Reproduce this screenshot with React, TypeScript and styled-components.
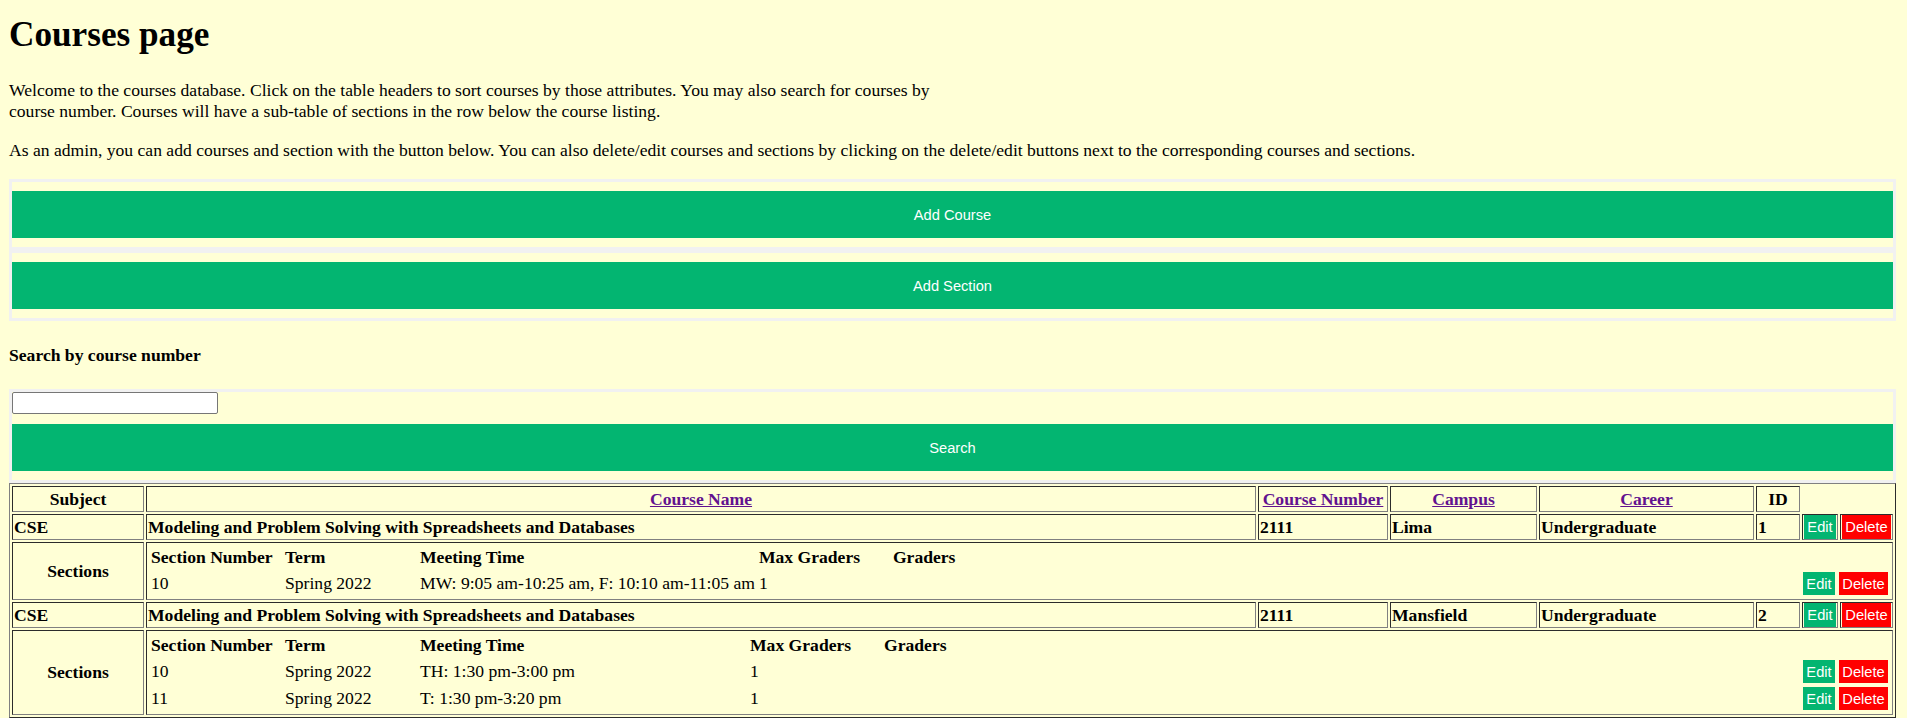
import React from "react";
import styled, { createGlobalStyle } from "styled-components";

const GlobalStyle = createGlobalStyle`
  html {
    overflow: hidden;
  }
  body {
    margin: 0;
    background: #ffffd6;
    color: #000;
    font-family: "Liberation Serif", "Times New Roman", serif;
  }
`;

const Page = styled.div`
  padding: 0 11px 20px 9px;
`;

const Title = styled.h1`
  font-size: 35.2px;
  font-weight: bold;
  line-height: normal;
  margin: 15px 0 25px;
`;

const Intro = styled.p<{ $narrow?: boolean }>`
  font-size: 17.6px;
  line-height: 21px;
  margin: 18px 0;
  width: ${(p) => (p.$narrow ? "50%" : "auto")};
`;

const ActionForm = styled.form`
  border: 3px solid #f1f1f1;
`;

const WideButton = styled.button`
  display: block;
  width: 100%;
  height: 47px;
  margin: 9px 0;
  padding: 0 20px;
  border: none;
  background: #03b571;
  color: #fff;
  font-family: "Liberation Sans", Arial, sans-serif;
  font-size: 14.67px;
  cursor: pointer;
`;

const SearchLabel = styled.h4`
  font-size: 17.6px;
  font-weight: bold;
  line-height: normal;
  margin: 23.5px 0;
`;

const SearchInput = styled.input`
  display: block;
  box-sizing: border-box;
  width: 206px;
  height: 22px;
  margin: 0 0 10px;
  padding: 1px 3px;
  border: 1px solid #767676;
  border-radius: 2px;
  background: #fff;
  font-family: "Liberation Sans", Arial, sans-serif;
  font-size: 14.67px;
`;

const CourseTable = styled.table`
  width: 100%;
  border: 1px outset grey;
  border-spacing: 2px;
  font-size: 17.6px;
`;

const HeadCell = styled.th<{ $w?: number }>`
  border: 1px inset grey;
  padding: 1px;
  line-height: 22px;
  text-align: center;
  white-space: nowrap;
  ${(p) => (p.$w ? `width: ${p.$w}px;` : "")}
`;

const SortLink = styled.a`
  color: #62128f;
  text-decoration: underline;
`;

const InfoCell = styled.td`
  border: 1px inset grey;
  padding: 1px;
  font-weight: bold;
  text-align: left;
  white-space: nowrap;
`;

const ActionCell = styled.td<{ $w: number }>`
  border: 1px inset grey;
  padding: 0 1px;
  width: ${(p) => p.$w}px;
`;

const SectionsLabel = styled.th`
  border: 1px inset grey;
  padding: 1px;
  text-align: center;
`;

const SectionsHolder = styled.td`
  border: 1px inset grey;
  padding: 1px;
`;

const SectionTable = styled.table`
  width: 100%;
  border-spacing: 2px;
  font-size: 17.6px;
`;

const SectionHead = styled.th<{ $w?: number }>`
  padding: 1px;
  text-align: left;
  white-space: nowrap;
  ${(p) => (p.$w ? `width: ${p.$w}px;` : "")}
`;

const SectionCell = styled.td<{ $w?: number }>`
  padding: 1px;
  white-space: nowrap;
  ${(p) => (p.$w ? `width: ${p.$w}px;` : "")}
`;

const RowButton = styled.button<{ $tone: "edit" | "delete"; $h: number }>`
  display: block;
  width: 100%;
  height: ${(p) => p.$h}px;
  padding: 0 3px;
  border: none;
  background: ${(p) => (p.$tone === "edit" ? "#03b571" : "#ff0000")};
  color: #fff;
  font-family: "Liberation Sans", Arial, sans-serif;
  font-size: 14.67px;
  cursor: pointer;
`;

type Section = {
  number: string;
  term: string;
  time: string;
  maxGraders: string;
  graders: string;
};

type Course = {
  id: number;
  subject: string;
  name: string;
  number: string;
  campus: string;
  career: string;
  sections: Section[];
};

const courses: Course[] = [
  {
    id: 1,
    subject: "CSE",
    name: "Modeling and Problem Solving with Spreadsheets and Databases",
    number: "2111",
    campus: "Lima",
    career: "Undergraduate",
    sections: [
      {
        number: "10",
        term: "Spring 2022",
        time: "MW: 9:05 am-10:25 am, F: 10:10 am-11:05 am",
        maxGraders: "1",
        graders: "",
      },
    ],
  },
  {
    id: 2,
    subject: "CSE",
    name: "Modeling and Problem Solving with Spreadsheets and Databases",
    number: "2111",
    campus: "Mansfield",
    career: "Undergraduate",
    sections: [
      {
        number: "10",
        term: "Spring 2022",
        time: "TH: 1:30 pm-3:00 pm",
        maxGraders: "1",
        graders: "",
      },
      {
        number: "11",
        term: "Spring 2022",
        time: "T: 1:30 pm-3:20 pm",
        maxGraders: "1",
        graders: "",
      },
    ],
  },
];

function SectionsRow({ sections }: { sections: Section[] }) {
  return (
    <tr>
      <SectionsLabel>Sections</SectionsLabel>
      <SectionsHolder colSpan={7}>
        <SectionTable>
          <thead>
            <tr>
              <SectionHead $w={130}>Section Number</SectionHead>
              <SectionHead $w={131}>Term</SectionHead>
              <SectionHead $w={326}>Meeting Time</SectionHead>
              <SectionHead $w={130}>Max Graders</SectionHead>
              <SectionHead>Graders</SectionHead>
            </tr>
          </thead>
          <tbody>
            {sections.map((s, i) => (
              <tr key={i}>
                <SectionCell>{s.number}</SectionCell>
                <SectionCell>{s.term}</SectionCell>
                <SectionCell>{s.time}</SectionCell>
                <SectionCell>{s.maxGraders}</SectionCell>
                <SectionCell>{s.graders}</SectionCell>
                <SectionCell $w={32}>
                  <RowButton $tone="edit" $h={23}>
                    Edit
                  </RowButton>
                </SectionCell>
                <SectionCell $w={49}>
                  <RowButton $tone="delete" $h={23}>
                    Delete
                  </RowButton>
                </SectionCell>
              </tr>
            ))}
          </tbody>
        </SectionTable>
      </SectionsHolder>
    </tr>
  );
}

export default function App() {
  return (
    <>
      <GlobalStyle />
      <Page>
        <Title>Courses page</Title>
        <Intro $narrow>
          Welcome to the courses database. Click on the table headers to sort
          courses by those attributes. You may also search for courses by
          course number. Courses will have a sub-table of sections in the row
          below the course listing.
        </Intro>
        <Intro>
          As an admin, you can add courses and section with the button below.
          You can also delete/edit courses and sections by clicking on the
          delete/edit buttons next to the corresponding courses and sections.
        </Intro>

        <ActionForm onSubmit={(e) => e.preventDefault()}>
          <WideButton type="submit">Add Course</WideButton>
        </ActionForm>
        <ActionForm onSubmit={(e) => e.preventDefault()}>
          <WideButton type="submit">Add Section</WideButton>
        </ActionForm>

        <SearchLabel>Search by course number</SearchLabel>
        <ActionForm onSubmit={(e) => e.preventDefault()}>
          <SearchInput type="text" />
          <WideButton type="submit">Search</WideButton>
        </ActionForm>

        <CourseTable>
          <thead>
            <tr>
              <HeadCell $w={128}>Subject</HeadCell>
              <HeadCell>
                <SortLink href="#">Course Name</SortLink>
              </HeadCell>
              <HeadCell $w={126}>
                <SortLink href="#">Course Number</SortLink>
              </HeadCell>
              <HeadCell $w={143}>
                <SortLink href="#">Campus</SortLink>
              </HeadCell>
              <HeadCell $w={211}>
                <SortLink href="#">Career</SortLink>
              </HeadCell>
              <HeadCell $w={40}>ID</HeadCell>
            </tr>
          </thead>
          <tbody>
            {courses.map((c) => (
              <React.Fragment key={c.id}>
                <tr>
                  <InfoCell>{c.subject}</InfoCell>
                  <InfoCell>{c.name}</InfoCell>
                  <InfoCell>{c.number}</InfoCell>
                  <InfoCell>{c.campus}</InfoCell>
                  <InfoCell>{c.career}</InfoCell>
                  <InfoCell>{c.id}</InfoCell>
                  <ActionCell $w={32}>
                    <RowButton $tone="edit" $h={24}>
                      Edit
                    </RowButton>
                  </ActionCell>
                  <ActionCell $w={49}>
                    <RowButton $tone="delete" $h={24}>
                      Delete
                    </RowButton>
                  </ActionCell>
                </tr>
                <SectionsRow sections={c.sections} />
              </React.Fragment>
            ))}
          </tbody>
        </CourseTable>
      </Page>
    </>
  );
}
